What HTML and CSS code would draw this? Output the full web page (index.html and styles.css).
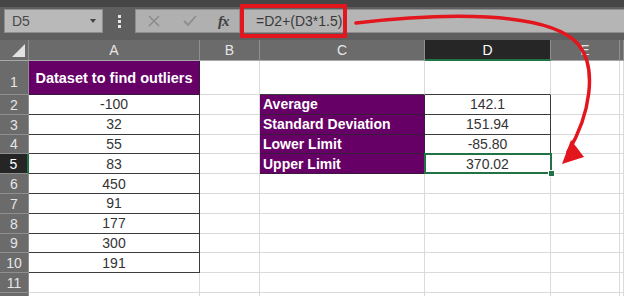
FILE: index.html
```html
<!DOCTYPE html>
<html lang="en">
<head>
    <meta charset="UTF-8">
    <meta name="viewport" content="width=device-width, initial-scale=1.0">
    <link rel="stylesheet" href="styles.css">
    <title>Outliers</title>
</head>
<body>
    <div class="app">
        <div class="topstrip"></div>
        <div class="bar">
            <div class="namebox">
                <span>D5</span>
                <span class="caret"></span>
            </div>
            <div class="dots"><i></i><i></i><i></i></div>
            <div class="buttons">
                <svg class="btn" width="16" height="16" viewBox="0 0 16 16"><path d="M3 3 L13 13 M13 3 L3 13" stroke="#8c8c8c" stroke-width="1.6" fill="none"/></svg>
                <svg class="btn" width="18" height="16" viewBox="0 0 18 16"><path d="M3 8 L7 12 L15 3" stroke="#8c8c8c" stroke-width="1.8" fill="none"/></svg>
                <span class="fx">fx</span>
            </div>
            <div class="formula">=D2+(D3*1.5)</div>
        </div>

        <div class="sheet">
            <div class="corner"><span class="tri"></span></div>
            <div class="colhead">A</div>
            <div class="colhead">B</div>
            <div class="colhead">C</div>
            <div class="colhead sel">D</div>
            <div class="colhead">E</div>
            <div class="colhead"></div>

            <div class="rowhead">1</div>
            <div class="cell purple title">Dataset to find outliers</div>
            <div class="cell"></div>
            <div class="cell dark-bottom"></div>
            <div class="cell dark-bottom"></div>
            <div class="cell"></div>
            <div class="cell"></div>

            <div class="rowhead">2</div>
            <div class="cell box">-100</div>
            <div class="cell"></div>
            <div class="cell purple label">Average</div>
            <div class="cell box">142.1</div>
            <div class="cell"></div>
            <div class="cell"></div>

            <div class="rowhead">3</div>
            <div class="cell box">32</div>
            <div class="cell"></div>
            <div class="cell purple label">Standard Deviation</div>
            <div class="cell box">151.94</div>
            <div class="cell"></div>
            <div class="cell"></div>

            <div class="rowhead">4</div>
            <div class="cell box">55</div>
            <div class="cell"></div>
            <div class="cell purple label">Lower Limit</div>
            <div class="cell box">-85.80</div>
            <div class="cell"></div>
            <div class="cell"></div>

            <div class="rowhead sel">5</div>
            <div class="cell box">83</div>
            <div class="cell"></div>
            <div class="cell purple label">Upper Limit</div>
            <div class="cell box active">370.02<span class="handle"></span></div>
            <div class="cell"></div>
            <div class="cell"></div>

            <div class="rowhead">6</div>
            <div class="cell box">450</div>
            <div class="cell"></div>
            <div class="cell"></div>
            <div class="cell"></div>
            <div class="cell"></div>
            <div class="cell"></div>

            <div class="rowhead">7</div>
            <div class="cell box">91</div>
            <div class="cell"></div>
            <div class="cell"></div>
            <div class="cell"></div>
            <div class="cell"></div>
            <div class="cell"></div>

            <div class="rowhead">8</div>
            <div class="cell box">177</div>
            <div class="cell"></div>
            <div class="cell"></div>
            <div class="cell"></div>
            <div class="cell"></div>
            <div class="cell"></div>

            <div class="rowhead">9</div>
            <div class="cell box">300</div>
            <div class="cell"></div>
            <div class="cell"></div>
            <div class="cell"></div>
            <div class="cell"></div>
            <div class="cell"></div>

            <div class="rowhead">10</div>
            <div class="cell box">191</div>
            <div class="cell"></div>
            <div class="cell"></div>
            <div class="cell"></div>
            <div class="cell"></div>
            <div class="cell"></div>

            <div class="rowhead">11</div>
            <div class="cell"></div>
            <div class="cell"></div>
            <div class="cell"></div>
            <div class="cell"></div>
            <div class="cell"></div>
            <div class="cell"></div>

            <div class="rowhead"></div>
            <div class="cell"></div>
            <div class="cell"></div>
            <div class="cell"></div>
            <div class="cell"></div>
            <div class="cell"></div>
            <div class="cell"></div>
        </div>

        <!-- annotation drawn over the screenshot -->
        <div class="redbox"></div>
        <svg class="arrow" width="624" height="296" viewBox="0 0 624 296">
            <path d="M356 23 C 440 13 548 10 578 44 C 598 68 590 115 568 152" stroke="#e3151d" stroke-width="3.5" fill="none" stroke-linecap="round"/>
            <polygon points="562,164 571,140 584,157" fill="#e3151d"/>
        </svg>
    </div>
</body>
</html>
```

FILE: styles.css
```css
body {
    margin: 0;
    background: #5f5f5f;
    font-family: "Liberation Sans", Arial, sans-serif;
}

.app {
    position: relative;
    width: 624px;
    height: 296px;
    overflow: hidden;
    background: #5f5f5f;
}

.topstrip {
    height: 7px;
    background: #464646;
}

.bar {
    display: flex;
    align-items: flex-start;
    height: 33px;
    padding: 2px 0 0 4px;
    box-sizing: border-box;
}

.namebox {
    display: flex;
    align-items: center;
    justify-content: space-between;
    width: 99px;
    height: 24px;
    padding: 0 6px 0 7px;
    box-sizing: border-box;
    background: #b9b9b9;
    border: 1px solid #8e8e8e;
    color: #4a4a4a;
    font-size: 14px;
}

.caret {
    width: 0;
    height: 0;
    border-left: 3px solid transparent;
    border-right: 3px solid transparent;
    border-top: 4px solid #444444;
}

.dots {
    display: flex;
    flex-direction: column;
    justify-content: center;
    gap: 2px;
    width: 32px;
    height: 24px;
    align-items: center;
}

.dots i {
    width: 3px;
    height: 3px;
    background: #e6e6e6;
}

.buttons {
    display: flex;
    align-items: center;
    width: 105px;
    height: 24px;
    padding-left: 10px;
    box-sizing: border-box;
    background: #b0b0b0;
    border: 1px solid #8e8e8e;
    gap: 19px;
}

.fx {
    font-family: "Liberation Serif", serif;
    font-style: italic;
    font-weight: bold;
    font-size: 15px;
    color: #404040;
    letter-spacing: -1px;
}

.formula {
    flex: 1;
    height: 24px;
    margin-left: 3px;
    padding-left: 12px;
    box-sizing: border-box;
    background: #b5b5b5;
    border: 1px solid #8e8e8e;
    border-right: none;
    color: #3a3a3a;
    font-size: 14px;
    line-height: 22px;
}

.sheet {
    display: grid;
    grid-template-columns: 29px 171px 60px 165px 126px 69px 4px;
    grid-template-rows: 21px 34px repeat(10, 19.8px) 20px;
    background: #ffffff;
}

.corner,
.colhead {
    background: #6b6b6b;
    border-right: 1px solid #8f8f8f;
    border-bottom: 1px solid #a8a8a8;
    box-sizing: border-box;
}

.corner {
    position: relative;
}

.tri {
    position: absolute;
    right: 3px;
    bottom: 3px;
    width: 0;
    height: 0;
    border-left: 13px solid transparent;
    border-bottom: 13px solid #e2e2e2;
}

.colhead {
    display: flex;
    align-items: center;
    justify-content: center;
    color: #e6e6e6;
    font-size: 14px;
}

.colhead.sel {
    background: #262626;
    border-bottom: 2px solid #217346;
    color: #ffffff;
}

.rowhead {
    display: flex;
    align-items: flex-end;
    justify-content: center;
    padding-bottom: 1px;
    background: #6b6b6b;
    border-right: 1px solid #8f8f8f;
    border-bottom: 1px solid #8f8f8f;
    box-sizing: border-box;
    color: #e6e6e6;
    font-size: 14px;
}

.rowhead:nth-child(8) {
    padding-bottom: 4px;
}

.rowhead.sel {
    background: #252525;
    border-right: 2px solid #217346;
    color: #ffffff;
}

.cell {
    display: flex;
    align-items: center;
    justify-content: center;
    border-right: 1px solid #dadada;
    border-bottom: 1px solid #dadada;
    box-sizing: border-box;
    color: #333333;
    font-size: 14px;
}

.cell.box {
    border-color: #3c3c3c;
}

.cell.dark-bottom {
    border-bottom-color: #3c3c3c;
}

.cell.purple {
    background: #660066;
    border-color: #3a1a3a;
    color: #ffffff;
    font-weight: bold;
}

.title {
    font-size: 14.5px;
}

.label {
    justify-content: flex-start;
    padding-left: 3px;
    font-size: 14px;
}

.active {
    position: relative;
}

.active::after {
    content: "";
    position: absolute;
    left: -1px;
    top: -1px;
    right: -2px;
    bottom: -1px;
    border: 2px solid #217346;
}

.handle {
    position: absolute;
    right: -5px;
    bottom: -4px;
    width: 5px;
    height: 5px;
    background: #217346;
    border: 1px solid #ffffff;
    z-index: 2;
}

.redbox {
    position: absolute;
    left: 240px;
    top: 4px;
    width: 107px;
    height: 34px;
    box-sizing: border-box;
    border: 4px solid #e3151d;
}

.arrow {
    position: absolute;
    left: 0;
    top: 0;
    pointer-events: none;
}
```
